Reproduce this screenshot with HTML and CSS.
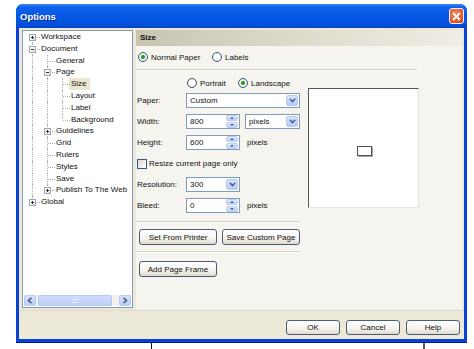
FILE: index.html
```html
<!doctype html>
<html lang="en">
  <head>
    <meta charset="UTF-8" />
    <title>Options</title>
    <link rel="stylesheet" href="styles.css">
  </head>
  <body>
    <div class="win">
      <div class="titlebar">
        <span class="title">Options</span>
        <span class="close">
          <svg width="9" height="9" viewBox="0 0 9 9"><path d="M1 1L8 8M8 1L1 8" stroke="#fff" stroke-width="1.8" /></svg>
        </span>
      </div>
      <div class="frame">
        <div class="panes">
          <div class="tree">
            <div class="nodes">
              <div class="row"><span class="g f"><i class="box plus"></i></span><span class="lbl">Workspace</span></div>
              <div class="row"><span class="g t"><i class="box"></i></span><span class="lbl">Document</span></div>
              <div class="row"><span class="g v"></span><span class="g t"></span><span class="lbl">General</span></div>
              <div class="row"><span class="g v"></span><span class="g t"><i class="box"></i></span><span class="lbl">Page</span></div>
              <div class="row"><span class="g v"></span><span class="g v"></span><span class="g t"></span><span class="lbl sel">Size</span></div>
              <div class="row"><span class="g v"></span><span class="g v"></span><span class="g t"></span><span class="lbl">Layout</span></div>
              <div class="row"><span class="g v"></span><span class="g v"></span><span class="g t"></span><span class="lbl">Label</span></div>
              <div class="row"><span class="g v"></span><span class="g v"></span><span class="g l"></span><span class="lbl">Background</span></div>
              <div class="row"><span class="g v"></span><span class="g t"><i class="box plus"></i></span><span class="lbl">Guidelines</span></div>
              <div class="row"><span class="g v"></span><span class="g t"></span><span class="lbl">Grid</span></div>
              <div class="row"><span class="g v"></span><span class="g t"></span><span class="lbl">Rulers</span></div>
              <div class="row"><span class="g v"></span><span class="g t"></span><span class="lbl">Styles</span></div>
              <div class="row"><span class="g v"></span><span class="g t"></span><span class="lbl">Save</span></div>
              <div class="row"><span class="g v"></span><span class="g l"><i class="box plus"></i></span><span class="lbl">Publish To The Web</span></div>
              <div class="row"><span class="g l"><i class="box plus"></i></span><span class="lbl">Global</span></div>
            </div>
            <div class="hscroll">
              <span class="sbtn">
                <svg width="6" height="7" viewBox="0 0 6 7"><path d="M4.5 0.8L1.5 3.5L4.5 6.2" fill="none" stroke="#4d6185" stroke-width="1.6" /></svg>
              </span>
              <span class="thumb"><i></i></span>
              <span class="sbtn">
                <svg width="6" height="7" viewBox="0 0 6 7"><path d="M1.5 0.8L4.5 3.5L1.5 6.2" fill="none" stroke="#4d6185" stroke-width="1.6" /></svg>
              </span>
            </div>
          </div>

          <div class="page">
            <div class="page-head">Size</div>
            <div class="page-body">
              <div class="kind">
                <label class="opt wide"><span class="radio on"></span>Normal Paper</label>
                <label class="opt"><span class="radio"></span>Labels</label>
              </div>
              <div class="rule long"></div>

              <div class="layout">
                <div class="form">
                  <div class="orient">
                    <label class="opt port"><span class="radio"></span>Portrait</label>
                    <label class="opt"><span class="radio on"></span>Landscape</label>
                  </div>
                  <div class="fields">
                    <span class="name">Paper:</span>
                    <div class="cell">
                      <span class="field select paper">Custom<span class="drop"><svg width="7" height="5" viewBox="0 0 7 5"><path d="M0.8 0.8L3.5 3.6L6.2 0.8" fill="none" stroke="#4d6185" stroke-width="1.5" /></svg></span></span>
                    </div>

                    <span class="name">Width:</span>
                    <div class="cell">
                      <span class="field spin">800<span class="arrows"><i class="up"></i><i class="down"></i></span></span>
                      <span class="field select unit">pixels<span class="drop"><svg width="7" height="5" viewBox="0 0 7 5"><path d="M0.8 0.8L3.5 3.6L6.2 0.8" fill="none" stroke="#4d6185" stroke-width="1.5" /></svg></span></span>
                    </div>

                    <span class="name">Height:</span>
                    <div class="cell">
                      <span class="field spin">600<span class="arrows"><i class="up"></i><i class="down"></i></span></span>
                      <span class="unit-text">pixels</span>
                    </div>

                    <label class="check"><span class="box-check"></span>Resize current page only</label>

                    <span class="name">Resolution:</span>
                    <div class="cell">
                      <span class="field select res">300<span class="drop"><svg width="7" height="5" viewBox="0 0 7 5"><path d="M0.8 0.8L3.5 3.6L6.2 0.8" fill="none" stroke="#4d6185" stroke-width="1.5" /></svg></span></span>
                    </div>

                    <span class="name">Bleed:</span>
                    <div class="cell">
                      <span class="field spin">0<span class="arrows"><i class="up"></i><i class="down"></i></span></span>
                      <span class="unit-text">pixels</span>
                    </div>
                  </div>
                </div>
                <div class="preview"><span class="sheet"></span></div>
              </div>

              <div class="rule"></div>
              <div class="btns">
                <button class="btn">Set From Printer</button>
                <button class="btn">Save Custom Page</button>
              </div>
              <div class="rule gap"></div>
              <div class="btns frame-row">
                <button class="btn">Add Page Frame</button>
              </div>
            </div>
          </div>
        </div>

        <div class="actions">
          <button class="btn">OK</button>
          <button class="btn">Cancel</button>
          <button class="btn">Help</button>
        </div>
      </div>
    </div>
    <div class="under"><span class="edge dark"></span><span class="edge grey"></span></div>
  </body>
</html>
```

FILE: styles.css
```css
* {
  box-sizing: border-box;
}
body {
  margin: 0;
  height: 349px;
  overflow: hidden;
  background: #ffffff;
  font-family: "Liberation Sans", Arial, sans-serif;
  font-size: 8px;
  color: #111111;
}
.win {
  margin: 4px 0 0 16px;
  width: 451px;
  padding: 0 3px 3px;
  background: #0843d6;
  border-radius: 7px 7px 0 0;
  border-bottom: 1px solid #00189c;
}
.titlebar {
  margin: 0 -3px;
  height: 24px;
  padding: 0 3px 0 4px;
  display: flex;
  align-items: center;
  justify-content: space-between;
  border-radius: 7px 7px 0 0;
  background: linear-gradient(#3c8df5 0%, #0f62ea 12%, #0558e6 50%, #0451dc 85%, #0343c8 100%);
}
.title {
  color: #ffffff;
  font-weight: bold;
  font-size: 9.5px;
  text-shadow: 1px 1px #0b2a8c;
}
.close {
  width: 15px;
  height: 16px;
  display: flex;
  align-items: center;
  justify-content: center;
  border: 1px solid #f4f0f0;
  border-radius: 3px;
  background: radial-gradient(circle at 40% 35%, #f08b63 0%, #e35c33 55%, #c9421e 100%);
}
.frame {
  height: 311px;
  background: #ece9d8;
}
.panes {
  display: grid;
  grid-template-columns: 111px 326px;
  column-gap: 3px;
  padding: 2px 0 0 3px;
  height: 283px;
  border-bottom: 1px solid #dedad0;
}

/* tree */
.tree {
  height: 278px;
  background: #ffffff;
  border: 1px solid #7f9db9;
  display: flex;
  flex-direction: column;
}
.nodes {
  padding: 0 0 0 2px;
}
.row {
  display: flex;
  height: 11.8px;
  line-height: 11.8px;
  white-space: nowrap;
}
.g {
  position: relative;
  width: 15px;
  flex: none;
}
.g::before,
.g::after {
  content: "";
  position: absolute;
}
.g.v::before,
.g.t::before {
  left: 7px;
  top: 0;
  bottom: 0;
  border-left: 1px dotted #b0b0b0;
}
.g.l::before {
  left: 7px;
  top: 0;
  height: 50%;
  border-left: 1px dotted #b0b0b0;
}
.g.f::before {
  left: 7px;
  top: 50%;
  bottom: 0;
  border-left: 1px dotted #b0b0b0;
}
.g.t::after,
.g.l::after,
.g.f::after {
  left: 8px;
  right: 0;
  top: 6px;
  border-top: 1px dotted #b0b0b0;
}
.box {
  position: absolute;
  left: 4px;
  top: 3px;
  width: 7px;
  height: 7px;
  z-index: 1;
  border: 1px solid #9aa6b3;
  background: linear-gradient(135deg, #ffffff 40%, #d8d5cc);
}
.box::before,
.box::after {
  content: "";
  position: absolute;
  background: #333333;
}
.box::before {
  left: 1px;
  top: 2px;
  width: 3px;
  height: 1px;
}
.box.plus::after {
  left: 2px;
  top: 1px;
  width: 1px;
  height: 3px;
}
.lbl {
  padding: 0 2px 0 1px;
}
.lbl.sel {
  margin-left: -1px;
  padding: 0 3px 0 2px;
  background: #ece6cf;
}
.hscroll {
  margin: auto 1px 1px;
  height: 11px;
  display: flex;
  background: #f3f2ee;
}
.sbtn {
  width: 12px;
  display: flex;
  align-items: center;
  justify-content: center;
  border-radius: 2px;
  border: 1px solid #b8cbf3;
  background: linear-gradient(#d3e0fd, #bccff9);
}
.sbtn:last-child {
  margin-left: auto;
}
.thumb {
  margin-left: 2px;
  width: 74px;
  display: flex;
  align-items: center;
  justify-content: center;
  border-radius: 2px;
  border: 1px solid #b4c8f4;
  background: linear-gradient(#cfdcfd, #bdd0fa);
}
.thumb i {
  width: 6px;
  height: 4px;
  border-top: 1px solid #e9f0ff;
  border-bottom: 1px solid #e9f0ff;
}

/* size page */
.page {
  display: flex;
  flex-direction: column;
  height: 280px;
}
.page-head {
  height: 16px;
  line-height: 16px;
  padding-left: 4px;
  font-weight: bold;
  background: linear-gradient(90deg, #c8c4b0 0%, #dcd9ca 45%, #f0eee5 100%);
}
.page-body {
  flex: 1;
  padding-top: 4px;
  background: #f5f4ee;
}
.kind {
  display: flex;
  align-items: center;
  height: 14px;
  padding-left: 2px;
}
.opt {
  display: flex;
  align-items: center;
  gap: 3px;
}
.opt.wide {
  width: 74px;
}
.radio {
  width: 10px;
  height: 10px;
  border-radius: 50%;
  border: 1px solid #34587f;
  background: radial-gradient(circle, #ffffff 40%, #e0ddd2);
  display: flex;
  align-items: center;
  justify-content: center;
}
.radio.on::before {
  content: "";
  width: 4px;
  height: 4px;
  border-radius: 50%;
  background: #2a9a28;
  box-shadow: 0 0 1px #57c156;
}
.rule {
  width: 164px;
  margin-top: 8px;
  border-top: 1px solid #d5d1c2;
  border-bottom: 1px solid #ffffff;
}
.rule.long {
  width: 281px;
  margin-top: 5px;
}
.rule.gap {
  margin-top: 6px;
}
.layout {
  display: flex;
}
.form {
  width: 164px;
}
.orient {
  display: flex;
  align-items: center;
  height: 14px;
  margin-top: 5px;
  padding-left: 51px;
}
.opt.port {
  width: 51px;
}
.fields {
  display: grid;
  grid-template-columns: 50px 1fr;
  grid-auto-rows: 15px;
  row-gap: 6px;
  margin-top: 3px;
}
.name {
  line-height: 15px;
  padding-left: 1px;
}
.cell {
  display: flex;
  align-items: center;
  gap: 5px;
}
.field {
  position: relative;
  height: 15px;
  line-height: 13px;
  padding-left: 3px;
  border: 1px solid #7f9db9;
  background: #ffffff;
}
.select.paper {
  width: 114px;
}
.select.unit {
  width: 55px;
}
.select.res,
.spin {
  width: 54px;
}
.drop {
  position: absolute;
  right: 1px;
  top: 1px;
  width: 12px;
  height: 11px;
  display: flex;
  align-items: center;
  justify-content: center;
  border-radius: 2px;
  border: 1px solid #b8cbf3;
  background: linear-gradient(#d6e2fe, #b7cbf8);
}
.arrows {
  position: absolute;
  right: 1px;
  top: 0;
  width: 12px;
  height: 13px;
  display: flex;
  flex-direction: column;
  gap: 1px;
}
.arrows i {
  flex: 1;
  position: relative;
  border-radius: 2px;
  border: 1px solid #bccef3;
  background: linear-gradient(#dbe5fd, #bed0f9);
}
.arrows i::before {
  content: "";
  position: absolute;
  left: 3px;
  border-left: 2px solid transparent;
  border-right: 2px solid transparent;
}
.arrows .up::before {
  top: 1px;
  border-bottom: 2px solid #4d6185;
}
.arrows .down::before {
  top: 1px;
  border-top: 2px solid #4d6185;
}
.unit-text {
  margin-left: 2px;
}
.check {
  grid-column: 1 / 3;
  display: flex;
  align-items: center;
  gap: 2px;
  padding-left: 1px;
}
.box-check {
  width: 10px;
  height: 10px;
  border: 1px solid #34587f;
  background: linear-gradient(135deg, #dcdad2, #ffffff);
}
.preview {
  margin: 17px 0 0 8px;
  width: 111px;
  height: 120px;
  display: flex;
  align-items: center;
  justify-content: center;
  background: #ffffff;
  border-top: 1px solid #555555;
  border-left: 1px solid #555555;
  border-right: 1px solid #e6e4dc;
  border-bottom: 1px solid #e6e4dc;
}
.sheet {
  width: 15px;
  height: 10px;
  margin: 5px 0 0 2px;
  border: 1px solid #505050;
  background: #ffffff;
  box-shadow: 1px 1px 0 #a8a8a8;
}
.btns {
  display: flex;
  gap: 5px;
  padding-left: 3px;
  margin-top: 6px;
}
.btns.frame-row {
  margin-top: 8px;
}
.btn {
  width: 78px;
  height: 16px;
  padding: 0;
  font-family: "Liberation Sans", Arial, sans-serif;
  font-size: 8px;
  color: #111111;
  border: 1px solid #4a5d73;
  border-radius: 3px;
  background: linear-gradient(#ffffff 0%, #f4f3ee 60%, #dedbd0 100%);
}
.actions {
  display: flex;
  justify-content: flex-end;
  gap: 6px;
  padding: 9px 4px 0 0;
}
.actions .btn {
  width: 54px;
  height: 15px;
}
.under {
  display: flex;
  height: 6px;
}
.edge {
  height: 6px;
}
.edge.dark {
  margin-left: 151px;
  width: 1px;
  background: #111111;
}
.edge.grey {
  margin-left: 271px;
  width: 2px;
  background: #5a5a5a;
}
```
